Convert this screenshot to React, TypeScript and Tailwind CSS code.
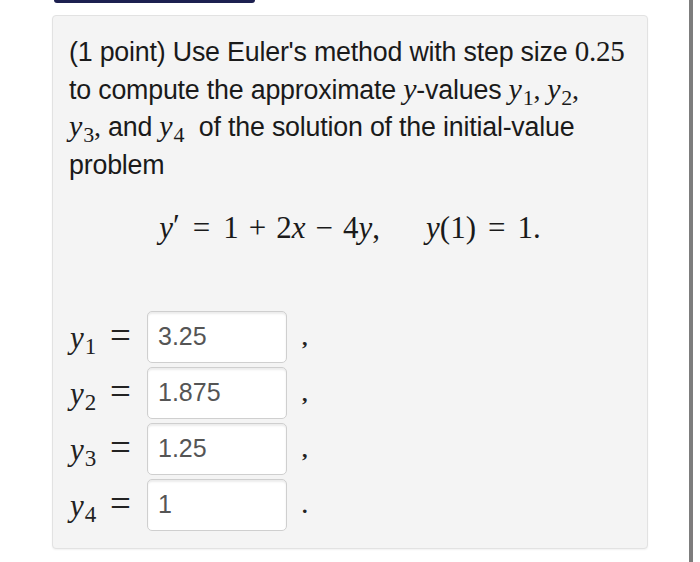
import React from "react";

const serif = "font-['Liberation_Serif','Times_New_Roman',serif]";

function Sub({ v, n, size = "text-[30px]", sub = "text-[22px]" }: { v: string; n: string; size?: string; sub?: string }) {
  return (
    <span className={`${serif} whitespace-nowrap leading-none`}>
      <i className={`${size} leading-none`}>{v}</i>
      <span className={`${sub} leading-none relative top-[6px] ml-[1px]`}>{n}</span>
    </span>
  );
}

function Row({ n, val, end }: { n: string; val: string; end: string }) {
  return (
    <div className="flex items-center h-[56px]">
      <div className="w-[38px] pl-[1px] text-[#222] leading-none">
        <Sub v="y" n={n} size="text-[31px]" sub="text-[23px]" />
      </div>
      <div className={`${serif} w-[40px] pl-[3px] text-[37px] text-[#222] text-left leading-none relative -top-[2px]`}>=</div>
      <div className="w-[140px] h-[52px] bg-white border border-[#cfcfcf] rounded-[5px] shadow-[inset_0_2px_2px_rgba(0,0,0,0.08)] flex items-center pl-[10px] text-[25px] text-[#555] font-['Liberation_Sans',Arial,sans-serif]">
        {val}
      </div>
      <div className={`${serif} ml-[15px] text-[22px] font-bold text-[#222]`}>{end}</div>
    </div>
  );
}

export default function App() {
  return (
    <div className="w-[700px] h-[562px] bg-white flex overflow-hidden">
      <div className="w-[689px] flex flex-col">
        <div className="ml-[54px] w-[201px] h-[3px] bg-[#1d2050] rounded-b-[3px]" />
        <div className="mt-[12px] ml-[52px] w-[596px] h-[534px] bg-[#f4f4f4] border border-[#e2e2e2] rounded-[4px] shadow-[0_1px_2px_rgba(0,0,0,0.06)] pl-[16px] pt-[18px]">
          <div className="font-['Liberation_Sans',Arial,sans-serif] text-[26.8px] leading-[37.5px] text-[#1a1a1a] whitespace-nowrap tracking-[-0.2px]">
            <div className="h-[37.5px]">
              (1 point) Use Euler's method with step size <span className={`${serif} text-[29px] leading-none`}>0.25</span>
            </div>
            <div className="h-[37.5px]">
              to compute the approximate <i className={`${serif} text-[30px] leading-none`}>y</i>-values <Sub v="y" n="1" />
              <span className={`${serif} text-[28px] leading-none`}>, </span>
              <Sub v="y" n="2" />
              <span className={`${serif} text-[28px] leading-none`}>,</span>
            </div>
            <div className="h-[37.5px]">
              <Sub v="y" n="3" />
              <span className={`${serif} text-[28px] leading-none`}>,</span> and <Sub v="y" n="4" />
              &nbsp; of the solution of the initial-value
            </div>
            <div className="h-[37.5px]">problem</div>
          </div>
          <div className={`${serif} text-[31px] leading-none text-[#1a1a1a] flex justify-center items-baseline pr-[16px] mt-[28px] whitespace-nowrap`}>
            <span><i>y</i><span className="relative -top-[2px]">′</span></span>
            <span className="mx-[13px]">=</span>
            <span>1</span>
            <span className="mx-[10px]">+</span>
            <span>2<i>x</i></span>
            <span className="mx-[10px]">−</span>
            <span>4<i>y</i>,</span>
            <span className="ml-[46px]"><i>y</i>(1)</span>
            <span className="mx-[12px]">=</span>
            <span>1.</span>
          </div>
          <div className="mt-[66px] flex flex-col">
            <Row n="1" val="3.25" end="," />
            <Row n="2" val="1.875" end="," />
            <Row n="3" val="1.25" end="," />
            <Row n="4" val="1" end="." />
          </div>
        </div>
      </div>
      <div className="w-[4px] h-full bg-[#7d7d7d]" />
    </div>
  );
}
